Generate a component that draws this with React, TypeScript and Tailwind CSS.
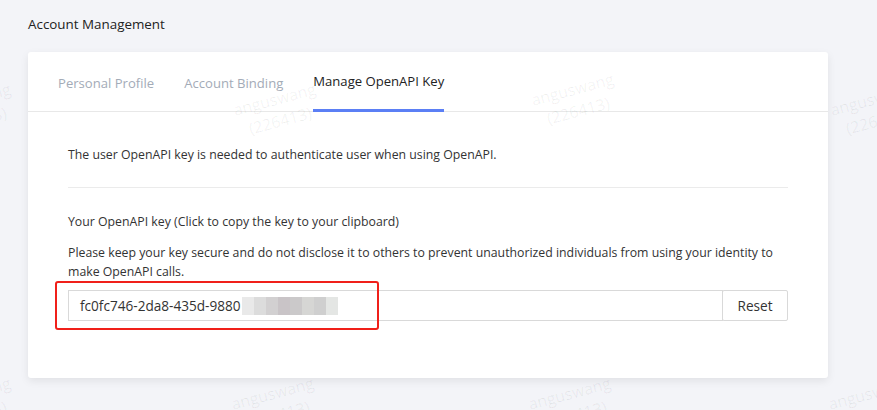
import React from "react";

const font = { fontFamily: '"Open Sans", "Noto Sans", Arial, sans-serif' };

const Watermark: React.FC<{ x: number; y: number }> = ({ x, y }) => {
  return (
    <div
      className="absolute flex flex-col items-center text-[16px] leading-[22px] text-black/[0.06] -rotate-[15deg] select-none"
      style={{ left: x, top: y }}
    >
      <span>anguswang</span>
      <span>(226413)</span>
    </div>
  );
};

const mosaic = ["#e9e9e9", "#dcdcdc", "#d2d0d1", "#c9c4c7", "#cbc9ca", "#d6d6d4", "#cfcfcf", "#e4e6e4"];

const App: React.FC = () => {
  const tabs = ["Personal Profile", "Account Binding", "Manage OpenAPI Key"];
  const active = 2;

  return (
    <div className="relative w-[877px] h-[410px] overflow-hidden bg-[#f3f4f8]" style={font}>
      <div className="px-[28px] pt-[14px]">
        <h1 className="text-[13.4px] leading-[20px] text-[#222]">Account Management</h1>

        <div className="mt-[18px] w-[800px] h-[326px] bg-white rounded-[3px] shadow-[0_3px_8px_rgba(0,0,0,0.08)]">
          <div className="flex gap-[30px] px-[30px] h-[60px] border-b border-[#e8e8e8]">
            {tabs.map((t, i) => (
              <div
                key={t}
                className={
                  i === active
                    ? "flex items-center h-[60px] text-[13.1px] text-[#222] border-b-[3px] border-[#5b7ff5] pt-[3px] -mb-px"
                    : "flex items-center h-[60px] text-[13.1px] text-[#a3abb7] pt-[3px]"
                }
              >
                {t}
              </div>
            ))}
          </div>

          <div className="px-[40px]">
            <p className="pt-[33px] text-[12.3px] leading-[20px] text-[#333]">
              The user OpenAPI key is needed to authenticate user when using OpenAPI.
            </p>
            <div className="mt-[22px] border-t border-[#ebebeb]" />
            <p className="mt-[24px] text-[12.3px] leading-[19px] text-[#333]">
              Your OpenAPI key (Click to copy the key to your clipboard)
            </p>
            <p className="mt-[12px] text-[12.3px] leading-[19px] text-[#333]">
              Please keep your key secure and do not disclose it to others to prevent unauthorized individuals from using your identity to make OpenAPI calls.
            </p>

            <div className="relative mt-[9px] flex h-[31px]">
              <div className="flex flex-1 items-center border border-[#d9d9d9] px-[11px] pt-px text-[13.6px] text-[#333]">
                <span>fc0fc746-2da8-435d-9880</span>
                <span className="flex h-[18px] ml-px">
                  {mosaic.map((c, i) => (
                    <span key={i} className="w-[12px] h-full" style={{ background: c }} />
                  ))}
                </span>
              </div>
              <button className="w-[66px] -ml-px border border-[#d9d9d9] bg-white pt-px text-[13.6px] text-[#333] rounded-[2px]">
                Reset
              </button>
              <div className="absolute left-[-13px] top-[-9px] w-[324px] h-[49px] border-[2.5px] border-[#f0201a] rounded-[3px] pointer-events-none" />
            </div>
          </div>
        </div>
      </div>

      <div className="absolute inset-0 pointer-events-none">
        <Watermark x={-70} y={88} />
        <Watermark x={235} y={88} />
        <Watermark x={533} y={78} />
        <Watermark x={832} y={88} />
        <Watermark x={-70} y={382} />
        <Watermark x={233} y={382} />
        <Watermark x={530} y={382} />
        <Watermark x={830} y={382} />
      </div>
    </div>
  );
};

export default App;
